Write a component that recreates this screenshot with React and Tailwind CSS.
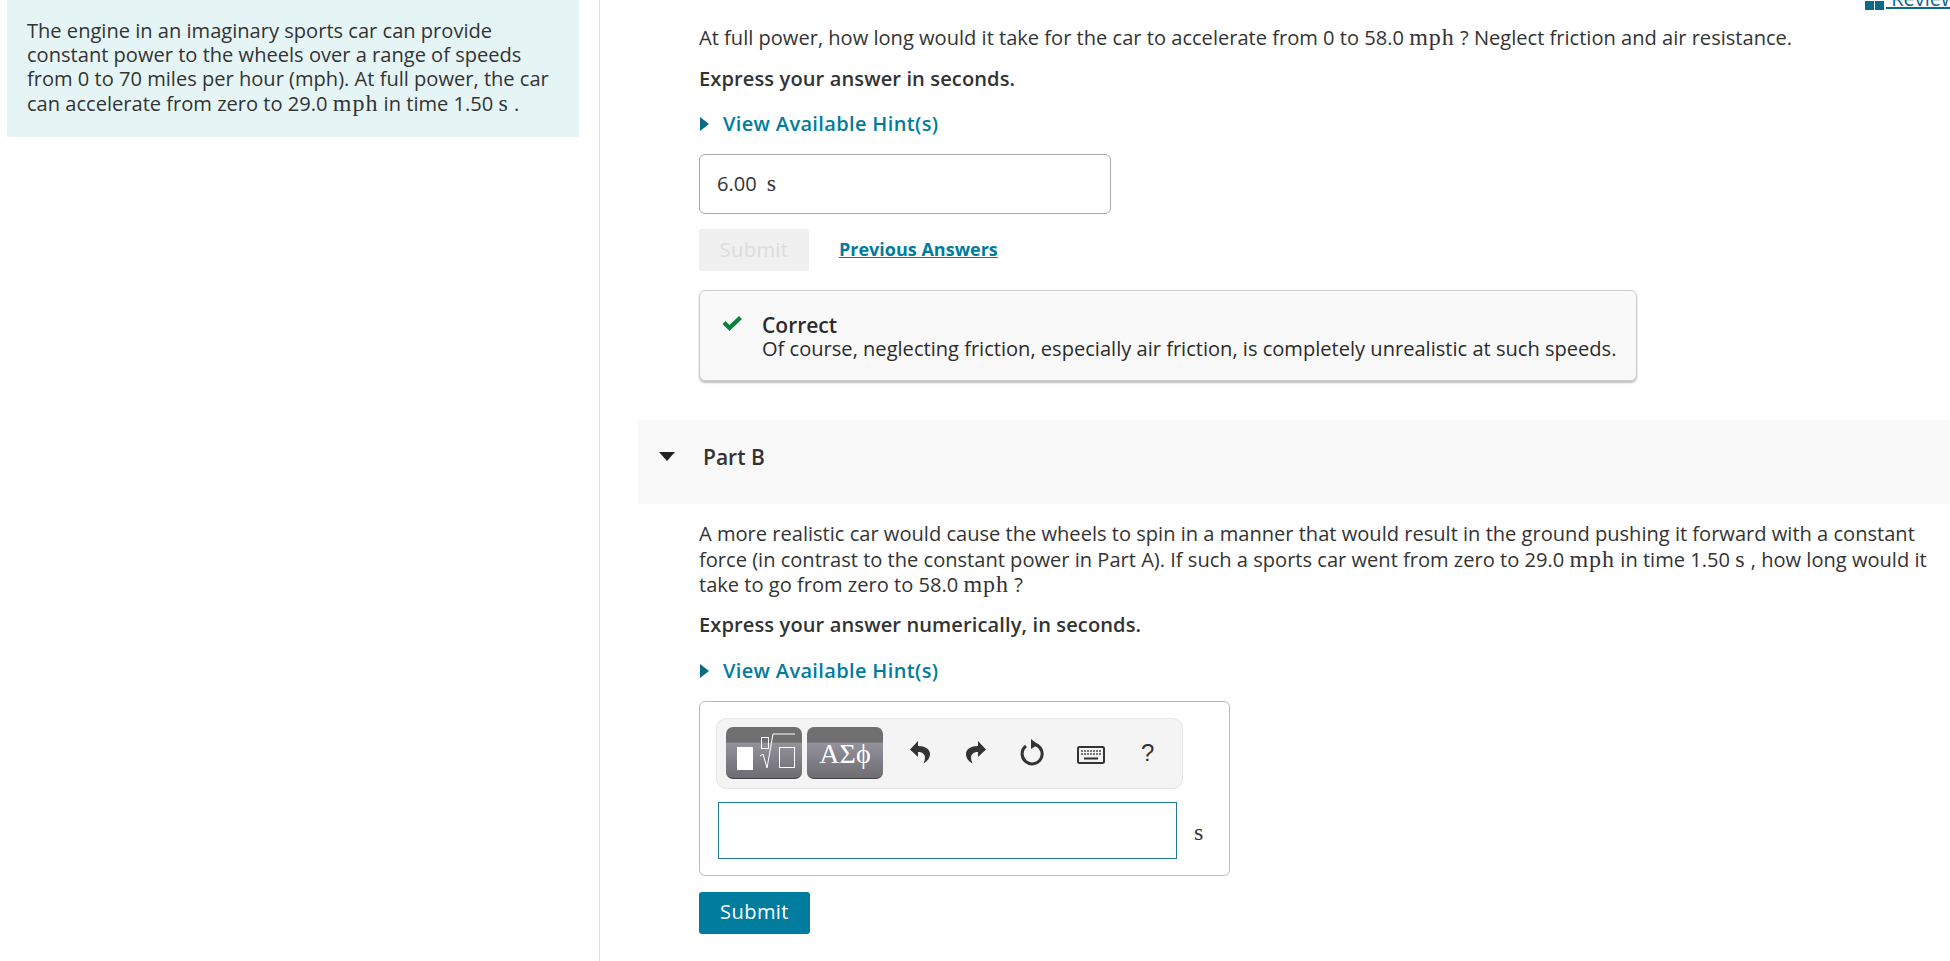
const Serif = ({ children }) => (
  <span className="font-['Liberation_Serif','Times_New_Roman',serif] text-[24px] tracking-[1px] leading-none">{children}</span>
);

const Hint = ({ className }) => (
  <div className={`flex items-center gap-[12px] font-semibold text-[#007c9e] text-[20px] tracking-[0.35px] leading-[24px] ${className}`}>
    <svg width="13" height="16" viewBox="0 0 13 16" className="-ml-[1px]"><path d="M2 1l9 7-9 7z" fill="#0a6a87" /></svg>
    <span>View Available Hint(s)</span>
  </div>
);

const btn = "relative w-[76px] h-[52px] rounded-[7px] overflow-hidden border-b border-[#444] bg-[linear-gradient(#6f6f6f_0,#6f6f6f_30%,#94919b_31%,#6e6d72_100%)]";

export default function App() {
  return (
    <div className="flex w-[1950px] h-[961px] overflow-hidden bg-white text-[#333] text-[20.08px] font-['Open_Sans',sans-serif]">
      <div className="w-[600px] shrink-0 border-r border-[#d9e4ec] pl-[7px]">
        <div className="w-[572px] h-[137px] bg-[#e5f5f6] pl-[20px] pr-[20px] pt-[19px] leading-[24px] text-[#333]">
          The engine in an imaginary sports car can provide constant power to the wheels over a range of speeds from 0 to 70 miles per hour (mph). At full power, the car can accelerate from zero to 29.0 <Serif>mph</Serif> in time 1.50 <Serif>s</Serif> .
        </div>
      </div>
      <div className="flex-1 min-w-0">
        <div className="h-[10px] overflow-hidden flex justify-end items-end">
          <div className="flex items-end text-[#0a6a87] text-[20px] leading-[20px] w-[85px] h-[10px] gap-[2px]">
            <svg width="19" height="9" viewBox="0 0 19 9" className="shrink-0"><path d="M0 0h9v9H0zM10 0h9v9h-9z" fill="#0a6a87" /></svg>
            <span className="underline whitespace-pre -mt-[11px] self-start">{" Review"}</span>
          </div>
        </div>
        <div className="pl-[99px] pr-[10px]">
          <p className="mt-[15px] leading-[24px]">At full power, how long would it take for the car to accelerate from 0 to 58.0 <Serif>mph</Serif> ? Neglect friction and air resistance.</p>
          <p className="mt-[17px] leading-[24px] font-semibold tracking-[0.1px]">Express your answer in seconds.</p>
          <Hint className="mt-[21px]" />
          <div className="mt-[18px] w-[412px] h-[60px] border border-[#aaa] rounded-[6px] flex items-center pl-[17px]">
            <span>6.00</span><span className="ml-[10px]"><Serif>s</Serif></span>
          </div>
          <div className="mt-[15px] flex items-center">
            <div className="w-[110px] h-[42px] rounded-[2px] bg-[#f0f0f0] text-[#dcdcdc] tracking-[0.4px] flex items-center justify-center">Submit</div>
            <a className="ml-[30px] -mt-[2px] font-bold text-[18px] text-[#007c9e] underline">Previous Answers</a>
          </div>
          <div className="mt-[19px] w-[938px] h-[91px] rounded-[6px] border border-[#ccc] bg-[#f9f9f9] shadow-[0_2px_2px_rgba(0,0,0,0.25)] flex pl-[21px] pt-[22px]">
            <svg width="22" height="17" viewBox="0 0 22 17" className="mt-[2px] shrink-0"><path d="M1.5 9l3-3 4 4L18 1l3 3L8.5 16z" fill="#0a8040" /></svg>
            <div className="ml-[19px] leading-[24px] text-[#2b2b2b]">
              <div className="font-semibold text-[21px]">Correct</div>
              <div>Of course, neglecting friction, especially air friction, is completely unrealistic at such speeds.</div>
            </div>
          </div>
        </div>
        <div className="mt-[39px] ml-[38px] h-[84px] bg-[#f9f9f9] flex items-center pl-[21px] font-semibold text-[21px] text-[#333]">
          <svg width="16" height="9" viewBox="0 0 16 9" className="-mt-[12px]"><path d="M0 0h16l-8 9z" fill="#222" /></svg>
          <span className="ml-[28px] -mt-[8px]">Part B</span>
        </div>
        <div className="pl-[99px] pr-[10px]">
          <p className="mt-[17px] leading-[25.5px]">A more realistic car would cause the wheels to spin in a manner that would result in the ground pushing it forward with a constant force (in contrast to the constant power in Part A). If such a sports car went from zero to 29.0 <Serif>mph</Serif> in time 1.50 <Serif>s</Serif> , how long would it take to go from zero to 58.0 <Serif>mph</Serif> ?</p>
          <p className="mt-[15px] leading-[24px] font-semibold tracking-[0.1px]">Express your answer numerically, in seconds.</p>
          <Hint className="mt-[22px]" />
          <div className="mt-[18px] w-[531px] h-[175px] border border-[#bbb] rounded-[6px] pl-[16px] pt-[16px]">
            <div className="w-[467px] h-[71px] rounded-[10px] border border-[#e5e5e5] bg-[#f4f4f4] flex items-center pl-[9px]">
              <div className={btn}>
                <div className="absolute left-[11px] top-[20px] w-[16px] h-[23px] bg-white" />
                <svg width="76" height="52" viewBox="0 0 76 52" className="absolute left-0 top-0" fill="none" stroke="#fff" strokeWidth="1">
                  <rect x="35.500" y="10.500" width="7" height="11" />
                  <path d="M34 29l3-2 4 14 6-34h22" />
                  <rect x="53.500" y="20.500" width="15" height="20" />
                </svg>
              </div>
              <div className={`${btn} ml-[5px] text-white text-[28px] flex items-center justify-center font-['Liberation_Serif',serif] pt-[2px]`}>ΑΣϕ</div>
              <svg width="20" height="24" viewBox="0 0 20 24" className="ml-[27px]" fill="#333"><path d="M8 0L0 8.500 8 16v-5c4 0 7 2 7 5.500 0 2-.5 4-1.500 6C18 20 20 16.500 20 13 20 8 15 5 8 5z" /></svg>
              <svg width="20" height="24" viewBox="0 0 20 24" className="ml-[36px]" fill="#333"><path d="M12 0l8 8.500L12 16v-5c-4 0-7 2-7 5.500 0 2 .5 4 1.500 6C2 20 0 16.500 0 13 0 8 5 5 12 5z" /></svg>
              <svg width="24" height="28" viewBox="0 0 24 28" className="ml-[34px]" fill="none" stroke="#333" strokeWidth="3"><path d="M15.500 5.500A10 10 0 1 1 6 7" /><path d="M11 0l7 5.500L11 10z" fill="#333" stroke="none" /></svg>
              <svg width="28" height="18" viewBox="0 0 28 18" className="ml-[33px] mt-[3px]" fill="none"><rect x="1" y="1" width="26" height="16" rx="1.500" stroke="#333" strokeWidth="2" /><path d="M4 5h20M4 8h20" stroke="#777" strokeWidth="2" strokeDasharray="2 1" /><path d="M7 12.500h14" stroke="#333" strokeWidth="2" /></svg>
              <span className="ml-[36px] text-[24px] leading-none font-['Liberation_Sans',sans-serif] text-[#333]">?</span>
            </div>
            <div className="mt-[13px] flex items-center">
              <div className="w-[459px] h-[57px] ml-[2px] border border-[#1f7a94] bg-white" />
              <span className="ml-[17px] mt-[6px]"><Serif>s</Serif></span>
            </div>
          </div>
          <div className="mt-[16px] w-[111px] h-[42px] rounded-[3px] bg-[#007c9e] text-white tracking-[0.4px] flex items-center justify-center">Submit</div>
        </div>
      </div>
    </div>
  );
}
